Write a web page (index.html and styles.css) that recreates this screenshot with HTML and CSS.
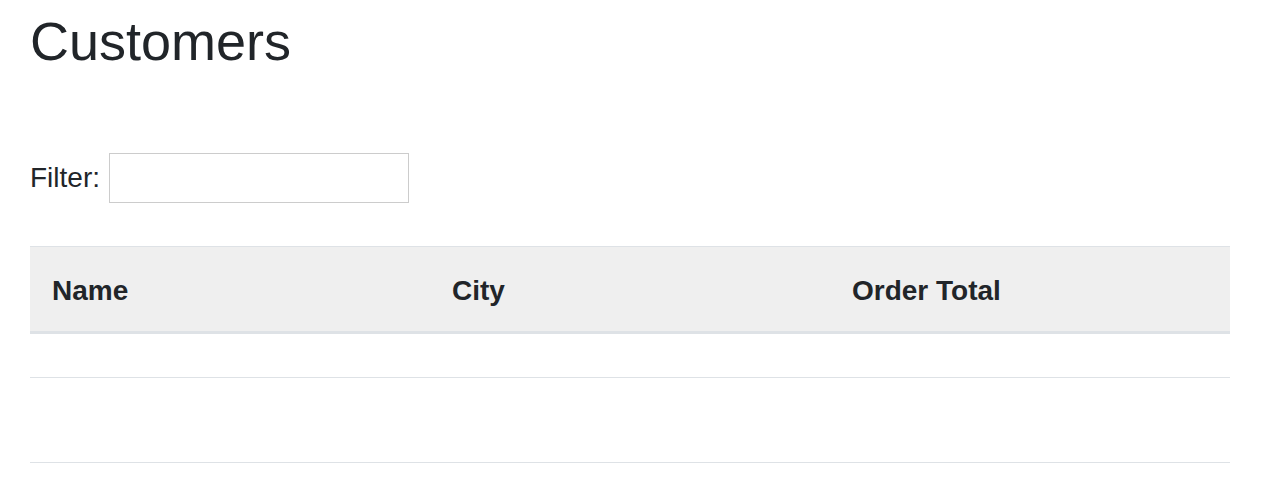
FILE: index.html
```html
<!DOCTYPE html>
<html lang="en">
<head>
    <meta charset="UTF-8">
    <meta name="viewport" content="width=device-width, initial-scale=1.0">
    <title>Customers</title>
    <link rel="stylesheet" href="styles.css">
</head>
<body>
    <div class="container">
        <h1>Customers</h1>

        <!-- Filter -->
        <div class="filter-row">
            <label for="filter">Filter:</label>
            <input type="text" id="filter" name="filter">
        </div>

        <!-- Customers table -->
        <table class="customers-table">
            <thead>
                <tr>
                    <th>Name</th>
                    <th>City</th>
                    <th>Order Total</th>
                </tr>
            </thead>
            <tbody>
                <tr class="empty-row">
                    <td></td>
                    <td></td>
                    <td></td>
                </tr>
                <tr>
                    <td>&nbsp;</td>
                    <td></td>
                    <td></td>
                </tr>
                <tr>
                    <td>&nbsp;</td>
                    <td></td>
                    <td></td>
                </tr>
            </tbody>
        </table>
    </div>
</body>
</html>
```

FILE: styles.css
```css
/* General Styles */
* {
    box-sizing: border-box;
}

body {
    font-family: "Liberation Sans", Arial, sans-serif;
    margin: 0;
    padding: 0;
    background-color: #fff;
    color: #212529;
    font-size: 28px;
    line-height: 1.5;
}

.container {
    width: 1200px;
    margin-left: 30px;
    padding-top: 9px;
}

h1 {
    margin: 0;
    font-size: 54px;
    font-weight: normal;
    line-height: 1.2;
}

.filter-row {
    display: flex;
    align-items: center;
    gap: 9px;
    margin-top: 79px;
}

.filter-row input {
    width: 300px;
    height: 50px;
    padding: 0 8px;
    border: 1px solid #cccccc;
    font-size: 28px;
    font-family: inherit;
    outline: none;
}

.customers-table {
    width: 100%;
    margin-top: 43px;
    border-collapse: separate;
    border-spacing: 0;
    table-layout: fixed;
}

.customers-table th {
    text-align: left;
    font-weight: bold;
    background-color: #efefef;
    padding: 23px 22px 19px;
    border-top: 1px solid #dee2e6;
    border-bottom: 3px solid #dee2e6;
}

.customers-table td {
    padding: 21px 22px;
    border-top: 1px solid #dee2e6;
}

.customers-table .empty-row td {
    border-top: none;
    padding: 21px 22px 22px;
}
```
